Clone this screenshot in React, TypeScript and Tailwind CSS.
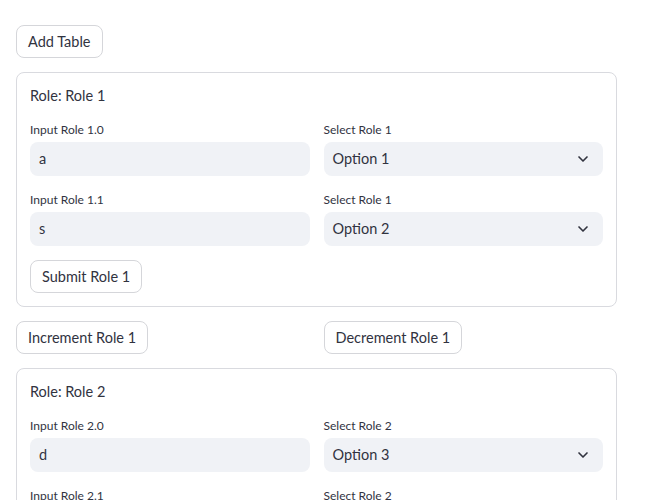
import { ChevronDown } from 'lucide-react'

const font = { fontFamily: 'Lato, "Noto Sans", "Liberation Sans", sans-serif' }

function Btn({ label, className = '' }: { label: string; className?: string }) {
  return (
    <button className={`h-[33px] rounded-lg border border-[#d5d6da] bg-white px-[11px] text-[14.5px] text-[#31333f] ${className}`}>{label}</button>
  )
}

function Field({ label, value }: { label: string; value: string }) {
  return (
    <div className="flex flex-col">
      <div className="mb-[4px] h-[16px] text-[12px] leading-[16px] text-[#31333f]">{label}</div>
      <div className="flex h-[34px] items-center rounded-lg bg-[#f0f2f6] px-[9px] text-[14.5px] text-[#31333f]">{value}</div>
    </div>
  )
}

function Select({ label, value }: { label: string; value: string }) {
  return (
    <div className="flex flex-col">
      <div className="mb-[4px] h-[16px] text-[12px] leading-[16px] text-[#31333f]">{label}</div>
      <div className="flex h-[34px] items-center justify-between rounded-lg bg-[#f0f2f6] pl-[9px] pr-[12px] text-[14.5px] text-[#31333f]">
        {value}
        <ChevronDown className="h-4 w-4" strokeWidth={2.5} />
      </div>
    </div>
  )
}

function RoleBox({ n, rows }: { n: number; rows: [string, string][] }) {
  return (
    <div className="w-[601px] rounded-lg border border-[#d9dadf] px-[13px] pb-[13px] pt-[14px]">
      <div className="h-[17px] text-[14.5px] leading-[17px] text-[#31333f]">Role: Role {n}</div>
      <div className="mt-[18px] flex flex-col gap-[16px]">
        {rows.map(([v, o], i) => (
          <div key={i} className="grid grid-cols-2 gap-[14px]">
            <Field label={`Input Role ${n}.${i}`} value={v} />
            <Select label={`Select Role ${n}`} value={o} />
          </div>
        ))}
      </div>
      <Btn label={`Submit Role ${n}`} className="mt-[14px]" />
    </div>
  )
}

export default function App() {
  return (
    <div className="h-[500px] w-[645px] overflow-hidden bg-white pl-4 pt-[25px]" style={font}>
      <Btn label="Add Table" />
      <div className="mt-[14px]">
        <RoleBox n={1} rows={[['a', 'Option 1'], ['s', 'Option 2']]} />
      </div>
      <div className="mt-[14px] grid w-[601px] grid-cols-2 gap-[14px]">
        <div><Btn label="Increment Role 1" /></div>
        <div><Btn label="Decrement Role 1" /></div>
      </div>
      <div className="mt-[14px]">
        <RoleBox n={2} rows={[['d', 'Option 3'], ['f', 'Option 4']]} />
      </div>
    </div>
  )
}
